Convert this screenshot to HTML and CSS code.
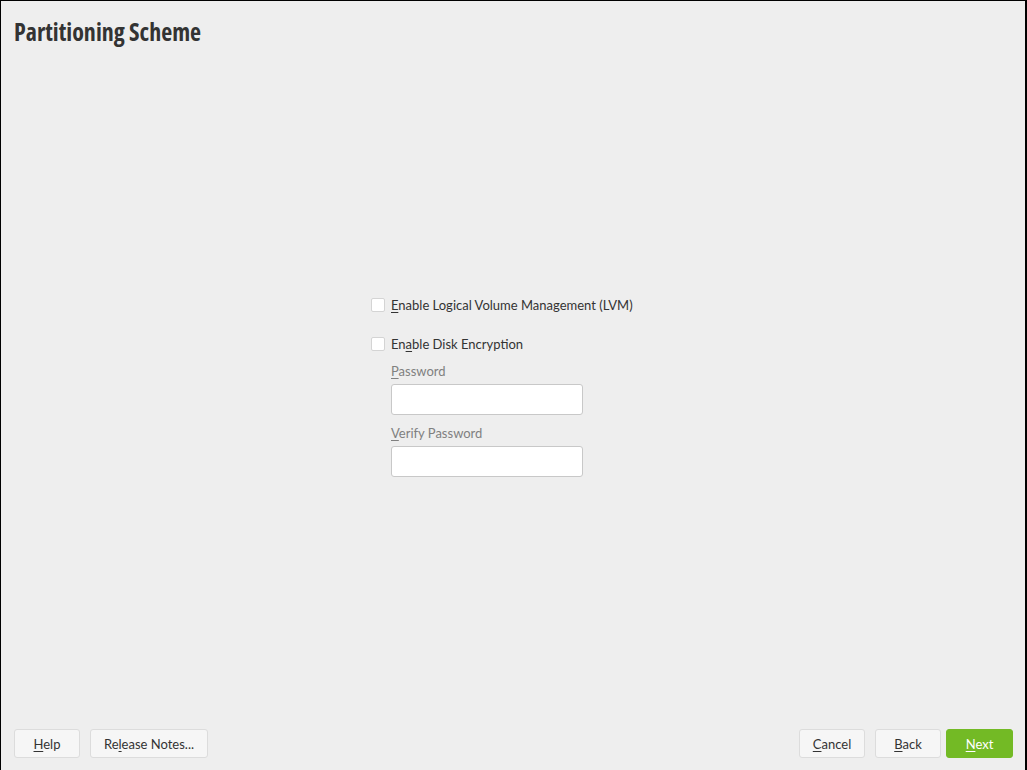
FILE: index.html
```html
<!DOCTYPE html>
<html>
<head>
<meta charset="utf-8">
<link rel="stylesheet" href="styles.css">
</head>
<body>
<div class="frame">
  <h1 class="title">Partitioning Scheme</h1>
  <div class="content">
    <div class="form">
      <label class="check"><span class="box"></span><span><u>E</u>nable Logical Volume Management (LVM)</span></label>
      <label class="check check2"><span class="box"></span><span>En<u>a</u>ble Disk Encryption</span></label>
      <div class="fields">
        <div class="flabel"><u>P</u>assword</div>
        <div class="input"></div>
        <div class="flabel flabel2"><u>V</u>erify Password</div>
        <div class="input"></div>
      </div>
    </div>
  </div>
  <div class="footer">
    <div class="group">
      <button class="btn btn-help"><u>H</u>elp</button>
      <button class="btn btn-notes">Re<u>l</u>ease Notes...</button>
    </div>
    <div class="group">
      <button class="btn btn-cancel"><u>C</u>ancel</button>
      <button class="btn btn-back"><u>B</u>ack</button>
      <button class="btn btn-next"><u>N</u>ext</button>
    </div>
  </div>
</div>
</body>
</html>
```

FILE: styles.css
```css
html, body {
  margin: 0;
  padding: 0;
  height: 100%;
}
body {
  background: #000;
  font-family: "Lato", "Open Sans", sans-serif;
  font-size: 13px;
  color: #333;
}
.frame {
  box-sizing: border-box;
  margin: 1px 2px 0 1px;
  height: 769px;
  background: #eeeeee;
  display: flex;
  flex-direction: column;
}
.title {
  margin: 0;
  padding: 16px 0 0 13px;
  height: 42px;
  font-family: "Open Sans", sans-serif;
  font-stretch: 75%;
  font-weight: 700;
  font-size: 24px;
  line-height: 30px;
  color: #333;
}
.content {
  flex: 1;
  padding: 238px 0 0 370px;
}
.form {
  display: flex;
  flex-direction: column;
}
.check {
  display: flex;
  align-items: center;
  gap: 6px;
  height: 16px;
  line-height: 16px;
}
.check2 {
  margin-top: 23px;
}
.box {
  width: 12px;
  height: 12px;
  border: 1px solid #d4d4d4;
  border-radius: 2px;
  background: #fff;
}
u {
  text-decoration: underline;
  text-underline-offset: 2px;
}
.fields {
  padding-left: 20px;
  padding-top: 11px;
}
.flabel {
  color: #808080;
  height: 16px;
  line-height: 16px;
}
.flabel2 {
  margin-top: 10px;
}
.input {
  margin-top: 5px;
  width: 190px;
  height: 29px;
  background: #fff;
  border: 1px solid #c8c8c8;
  border-radius: 3px;
}
.footer {
  display: flex;
  justify-content: space-between;
  padding: 0 12px 12px 13px;
}
.group {
  display: flex;
  gap: 10px;
}
.btn {
  font-family: inherit;
  font-size: 13px;
  color: #333;
  height: 29px;
  border: 1px solid #dcdcdc;
  border-radius: 3px;
  background: #f6f6f6;
  padding: 0;
}
.btn-help { width: 66px; }
.btn-notes { width: 118px; }
.btn-cancel { width: 66px; }
.btn-back { width: 66px; margin-right: -5px; }
.btn-next {
  width: 67px;
  background: #73ba25;
  border-color: #73ba25;
  color: #fff;
}
```
